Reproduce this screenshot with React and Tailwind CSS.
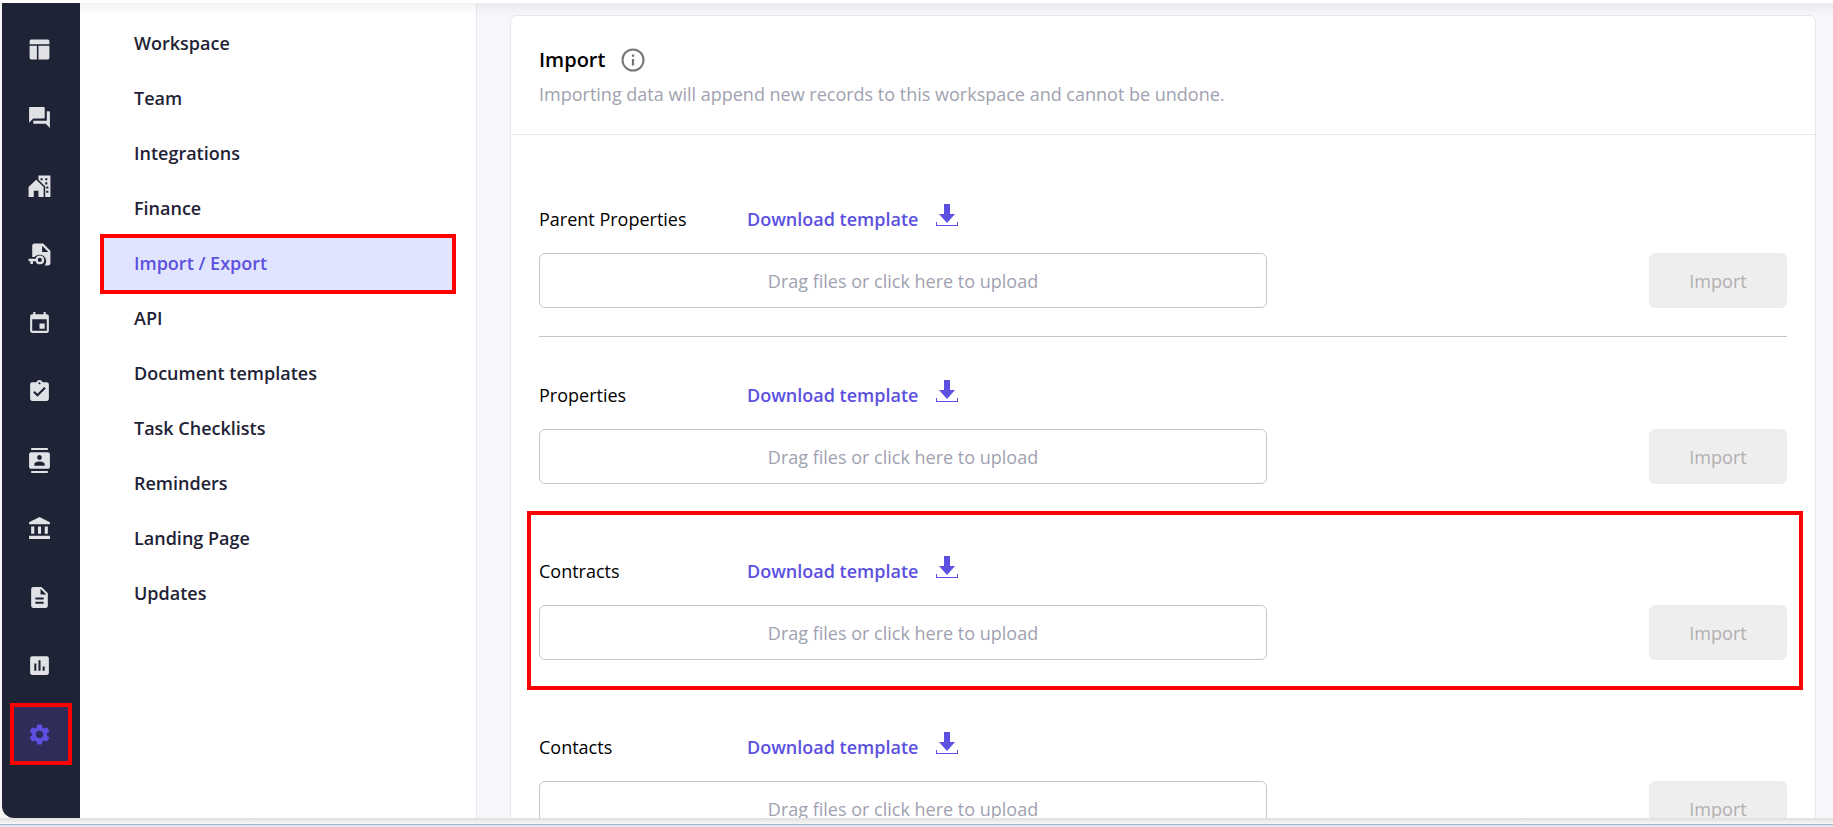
import clsx from 'clsx'
import {
  MdForum,
  MdEvent,
  MdAssignmentTurnedIn,
  MdContacts,
  MdAccountBalance,
  MdDescription,
  MdPoll,
  MdSettings,
} from 'react-icons/md'

const DashboardIcon = ({ className }) => (
  <svg viewBox="0 0 24 24" fill="currentColor" className={className}>
    <path d="M2.500 4A1.500 1.500 0 0 1 4 2.500h16A1.500 1.500 0 0 1 21.500 4v3H2.500zM2.500 8.500h7V21.500H4A1.500 1.500 0 0 1 2.500 20zM11 8.500h10.500V20a1.500 1.500 0 0 1-1.500 1.500h-9z" />
  </svg>
)

const PropertyIcon = ({ className }) => (
  <svg viewBox="0 0 24 24" fill="currentColor" className={className}>
    <path d="M1.500 12.500L8.800 5.500l7.200 7V22h-5v-6H6.500v6h-5z" />
    <path
      d="M11 1.500h11.500V22h-5V12L11 5.500zM13 4v2h2V4zM17.500 4v2h2V4zM17.500 8v2h2V8zM18.500 12v2h2v-2zM18.500 16v2h2v-2z"
      fillRule="evenodd"
    />
  </svg>
)

const ContractIcon = ({ className }) => (
  <svg viewBox="0 0 24 24" fill="currentColor" className={className}>
    <path
      d="M5 12.500V3.500A2 2 0 0 1 7 1.500h8.500L22.500 8.500V20.500a2 2 0 0 1-2 2H17a6 6 0 1 0-9.900-8H5zM14.500 3.500V9.500h6z"
      fillRule="evenodd"
    />
    <path
      d="M12.300 13a4.200 4.200 0 0 0-4 3H1.500v2.400h1.800V21h2.400v-2.600h2.600a4.200 4.200 0 1 0 4-5.400zm0 2.200a2 2 0 1 1 0 4 2 2 0 0 1 0-4z"
      fillRule="evenodd"
    />
  </svg>
)

const DownloadIcon = ({ className }) => (
  <svg viewBox="0 0 22 22" fill="currentColor" className={className}>
    <path d="M8 0h6v10h5l-8 9-8-9h5zM0 18h1v3h20v-3h1v4H0z" />
  </svg>
)

const InfoIcon = ({ className }) => (
  <svg viewBox="0 0 24 24" fill="none" stroke="currentColor" strokeWidth="2" className={className}>
    <circle cx="12" cy="12" r="10.500" />
    <path d="M12 11v6.500M12 6.500v2.200" strokeWidth="2.200" />
  </svg>
)

const railItems = [
  { label: 'Dashboard', icon: DashboardIcon },
  { label: 'Messages', icon: MdForum },
  { label: 'Properties', icon: PropertyIcon },
  { label: 'Contracts', icon: ContractIcon },
  { label: 'Calendar', icon: MdEvent },
  { label: 'Tasks', icon: MdAssignmentTurnedIn },
  { label: 'Contacts', icon: MdContacts },
  { label: 'Accounting', icon: MdAccountBalance },
  { label: 'Documents', icon: MdDescription },
  { label: 'Reports', icon: MdPoll },
  { label: 'Settings', icon: MdSettings, active: true },
]

const settingsLinks = [
  'Workspace',
  'Team',
  'Integrations',
  'Finance',
  'Import / Export',
  'API',
  'Document templates',
  'Task Checklists',
  'Reminders',
  'Landing Page',
  'Updates',
]

const importSections = [
  { id: 'parent-properties', title: 'Parent Properties' },
  { id: 'properties', title: 'Properties' },
  { id: 'contracts', title: 'Contracts', highlighted: true },
  { id: 'contacts', title: 'Contacts' },
]

const IconRail = () => (
  <nav className="flex w-[78px] shrink-0 flex-col items-center justify-between rounded-bl-xl bg-[#1f2336] pt-[15px] pb-[53px]">
    {railItems.map(({ label, icon: Icon, active }) => (
      <a
        key={label}
        href="#"
        aria-label={label}
        className={clsx(
          'flex size-[62px] items-center justify-center pr-1',
          active ? 'border-4 border-[#ff0000] bg-[#2f2c5a] text-[#5c50e0]' : 'text-[#e1e2e6]'
        )}
      >
        <Icon className="size-[25px]" />
      </a>
    ))}
  </nav>
)

const SettingsMenu = () => (
  <nav className="w-[397px] shrink-0 border-r border-[#e6e7ed] bg-white px-5 pt-3">
    {settingsLinks.map((name) => {
      const active = name === 'Import / Export'
      return (
        <a
          key={name}
          href="#"
          className={clsx(
            'relative flex h-[55px] items-center px-[34px] text-lg font-semibold',
            active ? 'bg-[#e1e4fe] text-[#5c50e0]' : 'text-[#1f2336]'
          )}
        >
          {name}
          {active && <span className="absolute inset-x-0 -top-px -bottom-1 border-4 border-[#ff0000]" />}
        </a>
      )
    })}
  </nav>
)

const ImportSection = ({ id, title, highlighted }) => (
  <section className="relative">
    <div className="grid h-[176px] grid-rows-[1fr_auto] border-b border-[#c4c4d0] pb-7">
      <div className="flex items-center pt-6">
        <label htmlFor={id} className="w-1/6 text-lg text-black">
          {title}
        </label>
        <a href="#" className="flex items-center gap-[18px] text-lg font-semibold text-[#5c50e0]">
          Download template
          <DownloadIcon className="mb-2 size-[22px]" />
        </a>
      </div>
      <div className="flex items-center justify-between">
        <input
          id={id}
          type="text"
          readOnly
          placeholder="Drag files or click here to upload"
          className="h-[55px] w-7/12 rounded-md border border-[#c4c4d0] text-center text-lg placeholder:text-[#9fa2b0]"
        />
        <button
          type="button"
          disabled
          className="h-[55px] w-[138px] rounded-md bg-[#eeeeee] text-lg text-[#b0b0b0]"
        >
          Import
        </button>
      </div>
    </div>
    {highlighted && (
      <div className="pointer-events-none absolute -top-0.5 -right-4 -bottom-px -left-3 border-4 border-[#ff0000]" />
    )}
  </section>
)

const ImportCard = () => (
  <div className="rounded-md border border-[#e6e7ed] bg-white">
    <header className="h-[119px] border-b border-[#e6e7ed] px-7 pt-7">
      <div className="flex items-center gap-4">
        <h1 className="text-xl leading-8 font-semibold text-black">Import</h1>
        <InfoIcon className="size-6 text-[#757575]" />
      </div>
      <p className="mt-1 text-lg text-[#9fa2b0]">
        Importing data will append new records to this workspace and cannot be undone.
      </p>
    </header>
    <div className="px-7 pt-[26px]">
      {importSections.map((section) => (
        <ImportSection key={section.id} {...section} />
      ))}
    </div>
  </div>
)

export default function App() {
  return (
    <div className="flex h-screen flex-col overflow-hidden bg-[#f5f5f5] font-['Open_Sans','Noto_Sans',sans-serif]">
      <div className="h-[3px] shrink-0 bg-white" />
      <div className="relative flex min-h-0 flex-1 pl-0.5">
        <IconRail />
        <SettingsMenu />
        <main className="min-w-0 flex-1 overflow-hidden bg-[#f5f7fb] pt-3 pr-[17px] pl-[33px]">
          <ImportCard />
        </main>
        <div className="pointer-events-none absolute top-0 right-0 left-20 h-3 bg-linear-to-b from-black/5 to-transparent" />
      </div>
      <footer className="shrink-0">
        <div className="h-1.5 bg-linear-to-b from-[#dedede] to-[#f8f8f8]" />
        <div className="h-[3px] border-t border-[#a9b8c6] bg-[#dce8f3]" />
      </footer>
    </div>
  )
}
